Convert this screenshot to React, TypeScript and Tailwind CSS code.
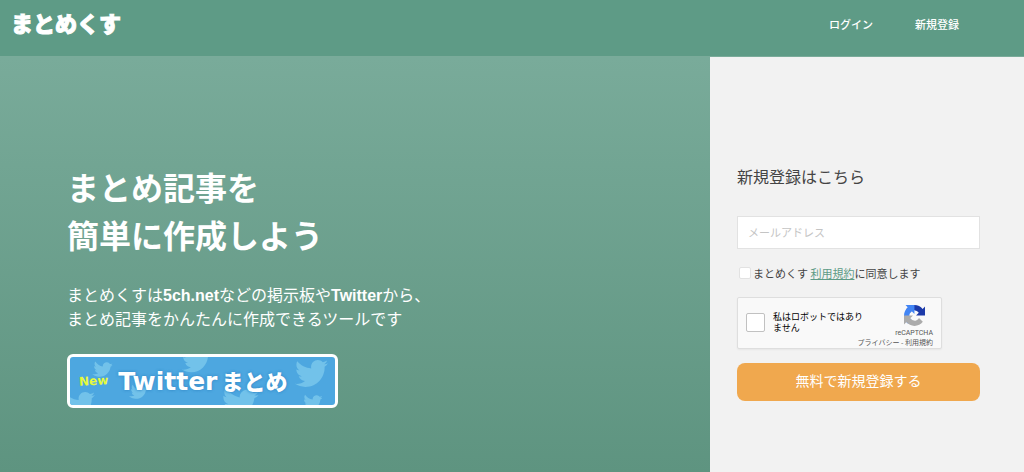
import { useState } from "react";
import { FaTwitter } from "react-icons/fa";

const birds = [
	{ x: 23, y: 3, size: 19, rotate: 8 },
	{ x: 112, y: -11, size: 29, rotate: 0 },
	{ x: 225, y: 0, size: 33, rotate: 0 },
	{ x: -7, y: 32, size: 32, rotate: 0 },
	{ x: 60, y: 27, size: 17, rotate: 12 },
	{ x: 151, y: 28, size: 36, rotate: 10 },
	{ x: 233, y: 36, size: 19, rotate: 6 },
];

export default function App() {
	return (
		<div className="flex min-h-screen flex-col font-['Noto_Sans_CJK_JP',sans-serif] text-[#444]">
			<Header />
			<main className="flex flex-1">
				<Hero />
				<SignUp />
			</main>
		</div>
	);
}

function Header() {
	return (
		<header className="flex h-[57px] items-center justify-between border-b border-[#7aab9a] bg-[#5e9b86] pr-[65px] pl-[11px] text-white">
			<a
				href="#"
				className="pb-3 text-[22px] leading-8 font-black [-webkit-text-stroke:1px_white]"
			>
				まとめくす
			</a>
			<nav className="flex gap-[42px] pb-[9px] text-[11px] leading-4 font-medium">
				<a href="#login">ログイン</a>
				<a href="#signup">新規登録</a>
			</nav>
		</header>
	);
}

function Hero() {
	return (
		<section className="min-w-0 flex-1 bg-linear-to-b from-[#79ab9a] to-[#5e9480] px-[67px] pt-[105px] text-white">
			<h1 className="text-[32px] leading-[48px] font-bold">
				まとめ記事を
				<br />
				簡単に作成しよう
			</h1>
			<p className="mt-6 text-base leading-6">
				まとめくすは<Latin>5ch.net</Latin>などの掲示板や<Latin>Twitter</Latin>から、
				<br />
				まとめ記事をかんたんに作成できるツールです
			</p>
			<TwitterBanner />
		</section>
	);
}

function Latin({ children }: { children: string }) {
	return (
		<span className="font-['Liberation_Sans',sans-serif] leading-none font-bold">{children}</span>
	);
}

function TwitterBanner() {
	return (
		<a
			href="#twitter"
			className="relative mt-6 flex h-[54px] w-[271px] items-center overflow-hidden rounded-md border-3 border-white bg-[#4da7e0]"
		>
			<svg className="absolute inset-0 h-full w-full text-[#72c2ea]" aria-hidden="true">
				{birds.map((bird) => (
					<g
						key={bird.x}
						transform={`rotate(${bird.rotate} ${bird.x + bird.size / 2} ${bird.y + bird.size / 2})`}
					>
						<FaTwitter x={bird.x} y={bird.y} size={bird.size} />
					</g>
				))}
			</svg>
			<span className="relative ml-[9px] -rotate-3 font-['DejaVu_Sans',sans-serif] text-xs font-bold text-[#e6f93c]">
				New
			</span>
			<span className="relative ml-[10px] flex items-baseline gap-1 leading-8 whitespace-nowrap [text-shadow:0_0_3px_#3a90cc,0_0_3px_#3a90cc]">
				<span className="font-['DejaVu_Sans',sans-serif] text-[25px] font-bold">Twitter</span>
				<span className="text-[22px] font-black">まとめ</span>
			</span>
		</a>
	);
}

function SignUp() {
	const [email, setEmail] = useState("");

	return (
		<section className="w-[314px] shrink-0 bg-[#f2f2f2] pt-[107px] pr-11 pl-[27px]">
			<h2 className="text-base leading-6">新規登録はこちら</h2>
			<form onSubmit={(e) => e.preventDefault()}>
				<input
					type="email"
					aria-label="メールアドレス"
					placeholder="メールアドレス"
					value={email}
					onChange={(e) => setEmail(e.target.value)}
					className="mt-7 block h-[33px] w-full border border-[#e2e2e2] bg-white px-[10px] pb-[2px] text-[11px] outline-none placeholder:text-[#c4c4c4]"
				/>
				<div className="mt-4 flex h-4 items-center pl-[2px] text-[11px] leading-4">
					<input
						id="terms"
						type="checkbox"
						className="mr-[2px] size-3 appearance-none rounded-xs border border-[#e2e2e2] bg-white checked:bg-[#5e9b86]"
					/>
					<label htmlFor="terms" className="pb-px">
						まとめくす{" "}
						<a href="#terms" className="text-[#5e9b86] underline">
							利用規約
						</a>
						に同意します
					</label>
				</div>
				<Recaptcha />
				<button
					type="submit"
					className="mt-[14px] h-[38px] w-full rounded-lg bg-[#f0a84e] pb-[3px] text-[14px] text-white"
				>
					無料で新規登録する
				</button>
			</form>
		</section>
	);
}

function Recaptcha() {
	return (
		<div className="mt-4 flex h-[52px] w-[205px] justify-between rounded-xs border border-[#dedede] bg-[#f9f9f9] px-2 shadow-xs">
			<div className="flex items-center pb-[2px]">
				<input
					id="robot"
					type="checkbox"
					className="size-[19px] shrink-0 appearance-none rounded-xs border border-[#c1c1c1] bg-white checked:bg-[#4285f4]"
				/>
				<label
					htmlFor="robot"
					className="ml-2 text-[9px] leading-[11px] whitespace-nowrap text-black"
				>
					私はロボットではあり
					<br />
					ません
				</label>
			</div>
			<div className="-ml-5 flex w-[75px] shrink-0 flex-col items-end pt-[7px] text-[7px] text-[#555]">
				<svg viewBox="0 0 64 64" className="mr-2 size-[21px]" aria-hidden="true">
					<path
						fill="#1c3aa9"
						d="M64 31.955l-.033-1.37V4.687l-7.16 7.16C50.948 4.674 42.033.093 32.05.093c-10.4 0-19.622 4.96-25.458 12.64l11.736 11.86a15.55 15.55 0 0 1 4.754-5.334c2.05-1.6 4.952-2.906 8.968-2.906.485 0 .86.057 1.135.163 4.976.393 9.288 3.14 11.828 7.124l-8.307 8.307L64 31.953"
					/>
					<path
						fill="#4285f4"
						d="M31.862.094l-1.37.033H4.594l7.16 7.16C4.58 13.147 0 22.06 0 32.046c0 10.4 4.96 19.622 12.64 25.458L24.5 45.768a15.55 15.55 0 0 1-5.334-4.754c-1.6-2.05-2.906-4.952-2.906-8.968 0-.485.057-.86.163-1.135.393-4.976 3.14-9.288 7.124-11.828l8.307 8.307L31.86.095"
					/>
					<path
						fill="#ababab"
						d="M.001 32.045l.033 1.37v25.898l7.16-7.16c5.86 7.173 14.774 11.754 24.76 11.754 10.4 0 19.622-4.96 25.458-12.64l-11.736-11.86a15.55 15.55 0 0 1-4.754 5.334c-2.05 1.6-4.952 2.906-8.968 2.906-.485 0-.86-.057-1.135-.163-4.976-.393-9.288-3.14-11.828-7.124l8.307-8.307c-10.522.04-22.4.066-27.295-.005"
					/>
				</svg>
				<span className="mt-[3px] font-['Roboto',sans-serif] leading-2">reCAPTCHA</span>
				<span className="mt-px leading-2 whitespace-nowrap">
					<a href="#privacy">プライバシー</a> - <a href="#rules">利用規約</a>
				</span>
			</div>
		</div>
	);
}
